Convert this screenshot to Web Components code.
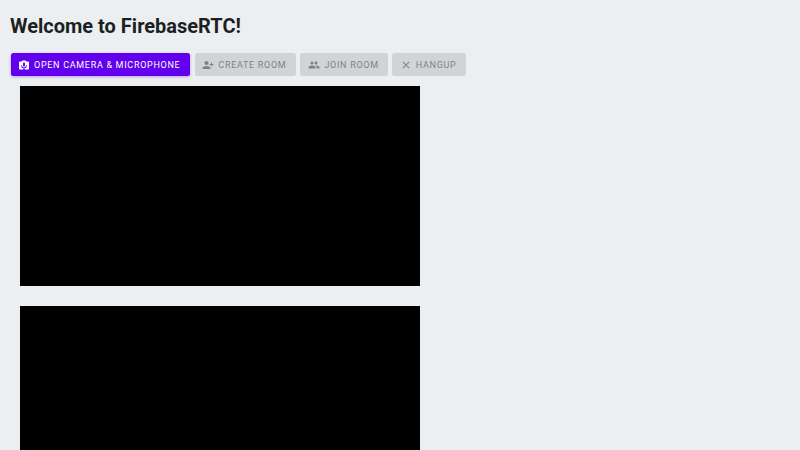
<!doctype html>
<html><head><meta charset="utf-8">
<style>
html,body{margin:0;height:100%;overflow:hidden;background:#eceff1}
body{font-family:Roboto,"Liberation Sans",sans-serif;color:#1c1f23}
</style></head><body>
<template id="t-app">
<style>
:host{display:block;padding:0 10px}
h1{margin:0;padding-top:13px;font:700 20px/26px Roboto,sans-serif;color:#1c1f23;height:26px}
.bar{display:flex;gap:4px;margin-top:14px;margin-left:1px}
.vids{display:flex;flex-direction:column;gap:20px;padding:10px 0 0 10px}
</style>
<h1><slot name="title"></slot></h1>
<div class="bar"><slot name="btn"></slot></div>
<div class="vids"><slot name="video"></slot></div>
</template>
<template id="t-btn">
<style>
:host{display:inline-flex;align-items:center;height:23px;box-sizing:border-box;padding:0 10px 0 7px;border-radius:2.5px;font:400 9px/12px Roboto,sans-serif;letter-spacing:.7px;text-transform:uppercase;white-space:nowrap;background:#d1d4d6;color:#7f8284}
:host([primary]){background:#6200ee;color:#fff;box-shadow:0 1px 3px rgba(98,0,238,.35);margin-right:1px}
:host([icon=group]){padding:0 9px 0 8px}
:host([icon=close]){padding:0 10px 0 8px}
svg{width:12px;height:12px;margin-right:4px;fill:currentColor;flex:none}
:host([icon=person_add]) svg{transform:scaleX(-1)}
.label{padding-top:1px}
</style>
<svg viewBox="0 0 24 24"><path id="p"/></svg><span class="label"><slot></slot></span>
</template>
<template id="t-video">
<style>:host{display:block;width:400px;height:200px;background:#000}</style>
</template>
<script>
const shadow=(el,id)=>{const r=el.attachShadow({mode:'open'});r.appendChild(document.getElementById(id).content.cloneNode(true));return r};
const icons={
camera:'M20 5h-3.17L15 3H9L7.17 5H4c-1.1 0-2 .9-2 2v12c0 1.1.9 2 2 2h7v-2.09c-2.83-.48-5-2.94-5-5.91h2c0 2.21 1.79 4 4 4s4-1.79 4-4h2c0 2.97-2.17 5.43-5 5.91V21h7c1.1 0 2-.9 2-2V7c0-1.1-.9-2-2-2zm-6 8c0 1.1-.9 2-2 2s-2-.9-2-2V9c0-1.1.9-2 2-2s2 .9 2 2v4z',
person_add:'M15 12c2.21 0 4-1.79 4-4s-1.79-4-4-4-4 1.79-4 4 1.79 4 4 4zm-9-2V7H4v3H1v2h3v3h2v-3h3v-2H6zm9 4c-2.67 0-8 1.34-8 4v2h16v-2c0-2.66-5.33-4-8-4z',
group:'M16 11c1.66 0 2.99-1.34 2.99-3S17.66 5 16 5c-1.66 0-3 1.34-3 3s1.34 3 3 3zm-8 0c1.66 0 2.99-1.34 2.99-3S9.66 5 8 5C6.34 5 5 6.34 5 8s1.34 3 3 3zm0 2c-2.33 0-7 1.17-7 3.5V19h14v-2.5c0-2.33-4.67-3.5-7-3.5zm8 0c-.29 0-.62.02-.97.05 1.16.84 1.97 1.97 1.97 3.45V19h6v-2.5c0-2.33-4.67-3.5-7-3.5z',
close:'M19 6.41 17.59 5 12 10.59 6.41 5 5 6.41 10.59 12 5 17.59 6.41 19 12 13.41 17.59 19 19 17.59 13.41 12z'};
customElements.define('rtc-app',class extends HTMLElement{constructor(){super();shadow(this,'t-app')}});
customElements.define('rtc-button',class extends HTMLElement{constructor(){super();this.r=shadow(this,'t-btn')}
connectedCallback(){this.r.getElementById('p').setAttribute('d',icons[this.getAttribute('icon')])}});
customElements.define('rtc-video',class extends HTMLElement{constructor(){super();shadow(this,'t-video')}});
</script>
<rtc-app>
<span slot="title">Welcome to FirebaseRTC!</span>
<rtc-button slot="btn" primary icon="camera">Open camera &amp; microphone</rtc-button>
<rtc-button slot="btn" icon="person_add">Create room</rtc-button>
<rtc-button slot="btn" icon="group">Join room</rtc-button>
<rtc-button slot="btn" icon="close">Hangup</rtc-button>
<rtc-video slot="video"></rtc-video>
<rtc-video slot="video"></rtc-video>
</rtc-app>
</body></html>
